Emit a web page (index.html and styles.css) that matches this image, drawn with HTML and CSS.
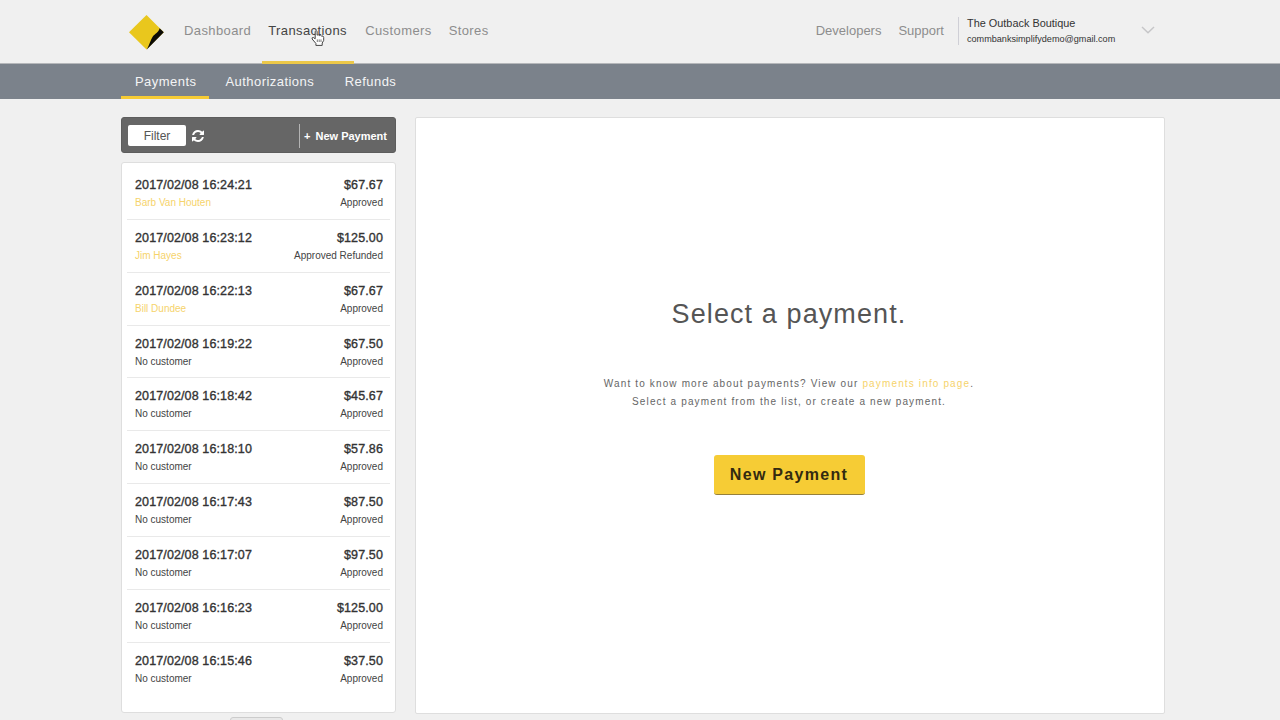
FILE: index.html
```html
<!DOCTYPE html>
<html lang="en">

<head>
	<meta charset="utf-8">
	<title>Payments</title>
	<meta name="viewport" content="width=device-width, initial-scale=1">
	<link rel="stylesheet" href="styles.css">
</head>

<body>
	<header class="top">
		<svg class="logo" viewBox="0 0 35 35" width="35" height="35">
			<path d="M17.5 0L34.8 17.2L17.5 34.6L0 17.2Z" fill="#e9c71d" />
			<path d="M30.6 13.2L34.8 17.2L17.8 34.6C20.4 30 21.6 25 23.8 21.6C25.8 18.6 29.6 17.6 30.6 13.2Z" fill="#0b0a06" />
		</svg>
		<nav class="main-nav">
			<a>Dashboard</a>
			<a class="active">Transactions
				<svg class="pointer" viewBox="0 0 14 18" width="14" height="18">
					<path d="M4.2 9.8V2.3Q5 .8 6.1 2.3V6.1Q7.4 5.2 8.2 6.5Q9.6 5.7 10.4 7Q12.5 6.4 12.7 8.5V11.4L11.2 14V16.4H4.9V14.4L1.1 10Q.7 8.2 2.4 8.5Z" fill="#fff" stroke="#444" stroke-width="1" />
					<path d="M6.3 10.4V13M8.2 10.4V13M10 10.4V13" stroke="#555" stroke-width=".8" />
				</svg>
			</a>
			<a>Customers</a>
			<a>Stores</a>
		</nav>
		<nav class="help-nav">
			<a>Developers</a>
			<a>Support</a>
		</nav>
		<div class="account">
			<div class="shop">The Outback Boutique</div>
			<div class="email">commbanksimplifydemo@gmail.com</div>
		</div>
		<svg class="chevron" viewBox="0 0 14 8" width="14" height="8">
			<path d="M1 1L7 6.7L13 1" fill="none" stroke="#c6c6c8" stroke-width="1.5" />
		</svg>
	</header>
	<nav class="sub-nav">
		<a class="active">Payments</a>
		<a>Authorizations</a>
		<a>Refunds</a>
	</nav>
	<main>
		<aside>
			<div class="toolbar">
				<button class="filter">Filter</button>
				<svg class="refresh" viewBox="0 0 1536 1536" width="12" height="12">
					<path d="M1511 928q0 5-1 7-64 268-268 434.500t-478 166.500q-146 0-282.500-55t-243.500-157l-129 129q-19 19-45 19t-45-19-19-45v-448q0-26 19-45t45-19h448q26 0 45 19t19 45-19 45l-137 137q71 66 161 102t187 36q134 0 250-65t186-179q11-17 53-117 8-23 30-23h192q13 0 22.500 9.500t9.500 22.500zM1536 128v448q0 26-19 45t-45 19h-448q-26 0-45-19t-19-45 19-45l138-138q-148-137-349-137-134 0-250 65t-186 179q-11 17-53 117-8 23-30 23h-199q-13 0-22.500-9.500t-9.500-22.500v-7q65-268 270-434.500t480-166.500q146 0 284 55.500t245 156.500l130-129q19-19 45-19t45 19 19 45z" fill="#fff" />
				</svg>
				<a class="add"><span>+</span>New Payment</a>
			</div>
			<ul class="payments">
				<li>
					<div class="line"><b>2017/02/08 16:24:21</b><b>$67.67</b></div>
					<div class="info"><a>Barb Van Houten</a><span>Approved</span></div>
				</li>
				<li>
					<div class="line"><b>2017/02/08 16:23:12</b><b>$125.00</b></div>
					<div class="info"><a>Jim Hayes</a><span>Approved Refunded</span></div>
				</li>
				<li>
					<div class="line"><b>2017/02/08 16:22:13</b><b>$67.67</b></div>
					<div class="info"><a>Bill Dundee</a><span>Approved</span></div>
				</li>
				<li>
					<div class="line"><b>2017/02/08 16:19:22</b><b>$67.50</b></div>
					<div class="info"><span>No customer</span><span>Approved</span></div>
				</li>
				<li>
					<div class="line"><b>2017/02/08 16:18:42</b><b>$45.67</b></div>
					<div class="info"><span>No customer</span><span>Approved</span></div>
				</li>
				<li>
					<div class="line"><b>2017/02/08 16:18:10</b><b>$57.86</b></div>
					<div class="info"><span>No customer</span><span>Approved</span></div>
				</li>
				<li>
					<div class="line"><b>2017/02/08 16:17:43</b><b>$87.50</b></div>
					<div class="info"><span>No customer</span><span>Approved</span></div>
				</li>
				<li>
					<div class="line"><b>2017/02/08 16:17:07</b><b>$97.50</b></div>
					<div class="info"><span>No customer</span><span>Approved</span></div>
				</li>
				<li>
					<div class="line"><b>2017/02/08 16:16:23</b><b>$125.00</b></div>
					<div class="info"><span>No customer</span><span>Approved</span></div>
				</li>
				<li>
					<div class="line"><b>2017/02/08 16:15:46</b><b>$37.50</b></div>
					<div class="info"><span>No customer</span><span>Approved</span></div>
				</li>
			</ul>
			<div class="pager"></div>
		</aside>
		<section class="detail">
			<h1>Select a payment.</h1>
			<p>Want to know more about payments? View our <a>payments info page</a>.<br>
				Select a payment from the list, or create a new payment.</p>
			<button class="new">New Payment</button>
		</section>
	</main>
</body>

</html>
```
FILE: styles.css
```css
:root {
	--yellow: #f6cc35;
	--link: #f6d36b;
	--grey: #f0f0f0;
	--text: #444;
}

* {
	box-sizing: border-box;
}

body {
	margin: 0;
	height: 720px;
	overflow: hidden;
	background: var(--grey);
	color: var(--text);
	font-family: "Liberation Sans", Arial, Helvetica, sans-serif;
}

button {
	border: 0;
	font-family: inherit;
}

.top {
	display: flex;
	align-items: center;
	height: 64px;
	padding-left: 129px;
	border-bottom: 1px solid #b5b7ba;
	font-size: 13px;
	letter-spacing: 0.4px;
	color: #8d8d8d;
}

.logo {
	margin-top: 1px;
}

.main-nav {
	display: flex;
	align-self: stretch;
	margin-left: 14px;
}

.main-nav a {
	position: relative;
	height: 64px;
	padding: 0 6px;
	margin-right: 5px;
	line-height: 61px;
}

.main-nav .active {
	width: 92px;
	color: var(--text);
	border-bottom: 3px solid #ecc849;
}

.pointer {
	position: absolute;
	left: 49px;
	top: 29px;
}

.help-nav {
	display: flex;
	gap: 17px;
	margin-left: auto;
	line-height: 61px;
	letter-spacing: 0;
	padding-bottom: 2px;
}

.account {
	width: 189px;
	height: 28px;
	margin: 0 0 2px 14px;
	padding-left: 8px;
	border-left: 1px solid #cfcfd6;
	color: #333;
	letter-spacing: 0;
}

.shop {
	font-size: 10.9px;
	line-height: 12px;
}

.email {
	margin-top: 4px;
	font-size: 9.1px;
	line-height: 12px;
}

.chevron {
	margin: 0 125px 3px -6px;
}

.sub-nav {
	display: flex;
	height: 35px;
	padding-left: 121px;
	background: #7b828b;
	color: #f4f4f5;
	font-size: 13px;
	letter-spacing: 0.45px;
	line-height: 35px;
}

.sub-nav a {
	height: 35px;
	padding: 0 14px;
	margin-right: 2.5px;
}

.sub-nav .active {
	width: 88px;
	border-bottom: 3px solid var(--yellow);
}

main {
	display: flex;
	gap: 19px;
	padding: 18px 0 0 121px;
}

aside {
	width: 275px;
}

.toolbar {
	display: flex;
	align-items: center;
	height: 36px;
	padding: 1px 8px 0 6px;
	border: 1px solid #5d5d5d;
	border-radius: 3px;
	background: #666;
}

.filter {
	width: 58px;
	height: 21px;
	padding: 0;
	border-radius: 2px;
	background: #fff;
	color: #555;
	font-size: 12px;
	line-height: 23px;
}

.refresh {
	margin-left: 6px;
}

.add {
	margin-left: auto;
	padding-left: 4px;
	border-left: 1px solid #b4b4b4;
	color: #fff;
	font-size: 11px;
	font-weight: bold;
	line-height: 24px;
}

.add span {
	margin-right: 5px;
}

.payments {
	height: 551px;
	margin: 9px 0 0;
	padding: 4px 5px 0;
	list-style: none;
	background: #fff;
	border: 1px solid #dedede;
	border-radius: 3px;
}

.payments li {
	height: 52.85px;
	padding: 10px 7px 0 8px;
	border-bottom: 1px solid #e9e9e9;
}

.payments li:last-child {
	border-bottom: 0;
}

.line,
.info {
	display: flex;
	justify-content: space-between;
}

.line b {
	font-size: 12.5px;
	font-weight: normal;
	line-height: 16px;
	letter-spacing: 0.12px;
	color: #333;
	-webkit-text-stroke: 0.35px #333;
}

.info {
	margin-top: 3px;
	font-size: 10px;
	line-height: 14px;
}

.info a,
.detail a {
	color: var(--link);
}

.pager {
	width: 53px;
	height: 20px;
	margin: 4px 0 0 109px;
	border: 1px solid #ccc;
	border-radius: 3px;
	background: #e8e8e8;
}

.detail {
	display: flex;
	flex-direction: column;
	align-items: center;
	width: 750px;
	height: 597px;
	padding-right: 2px;
	background: #fff;
	border: 1px solid #dedede;
	border-radius: 2px;
}

.detail h1 {
	margin: 180px 0 0;
	font-size: 27px;
	font-weight: normal;
	letter-spacing: 1.1px;
	line-height: 32px;
	color: #555;
}

.detail p {
	margin: 45px 0 0;
	font-size: 10px;
	letter-spacing: 1.14px;
	line-height: 18px;
	text-align: center;
	color: #666;
}

.new {
	width: 151px;
	height: 40px;
	margin-top: 44px;
	padding: 1px 0 0;
	border-bottom: 1px solid #96803a;
	border-radius: 3px;
	background: var(--yellow);
	color: #332a10;
	font-size: 16px;
	font-weight: bold;
	letter-spacing: 1.3px;
}
```
